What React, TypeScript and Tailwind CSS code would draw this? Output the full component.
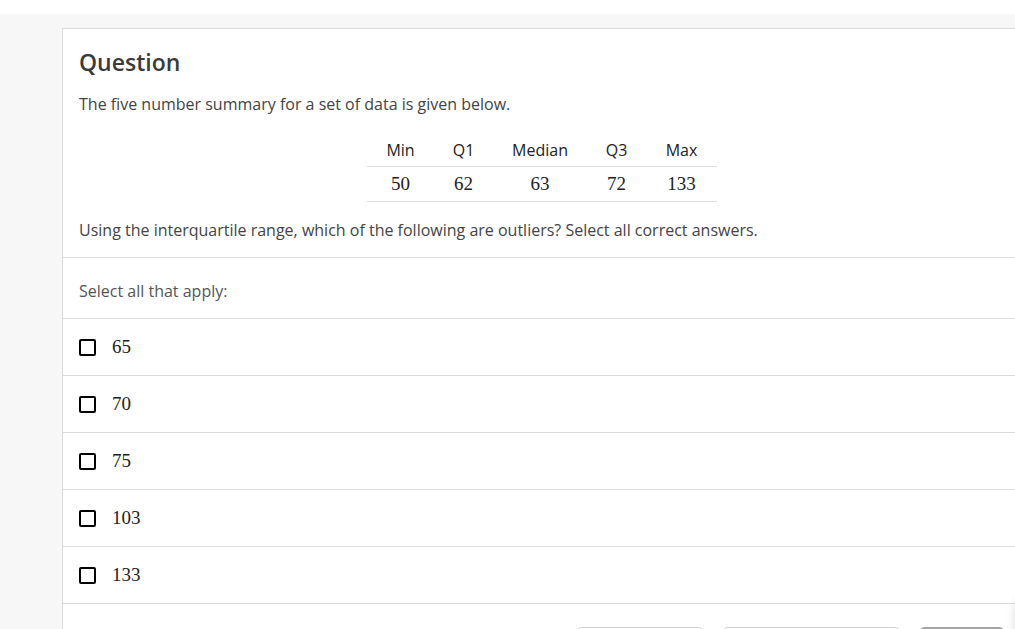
import React from "react";

const font = { fontFamily: '"Open Sans", "Noto Sans", sans-serif' };

const headers = [
  { label: "Min", w: "w-[67px]" },
  { label: "Q1", w: "w-[59px]" },
  { label: "Median", w: "w-[94px]" },
  { label: "Q3", w: "w-[59px]" },
  { label: "Max", w: "w-[71px]" },
];
const values = ["50", "62", "63", "72", "133"];
const options = ["65", "70", "75", "103", "133"];

export default function App() {
  return (
    <div
      className="relative w-[1015px] h-[629px] overflow-hidden bg-white"
      style={font}
    >
      <div className="mt-[14px] h-[615px] bg-[#f7f7f7] pt-[14px] pl-[62px]">
        <div className="w-[960px] border border-[#dcdcdc] bg-white">
          {/* Question section */}
          <div className="px-4 pt-[17px] pb-[15px] border-b border-[#dcdcdc]">
            <h1 className="text-[23px] leading-[32px] font-semibold text-[#3a3a3a]">
              Question
            </h1>
            <p className="mt-[14px] text-[16px] leading-[24px] text-[#444]">
              The five number summary for a set of data is given below.
            </p>
            <div className="mt-[18px] flex justify-center">
              <div className="flex flex-col">
                <div className="flex h-[33px] border-b border-[#dcdcdc]">
                  {headers.map((h) => (
                    <div
                      key={h.label}
                      className={`${h.w} flex items-center justify-center text-[16px] text-[#222]`}
                    >
                      {h.label}
                    </div>
                  ))}
                </div>
                <div className="flex h-[35px] border-b border-[#dcdcdc]">
                  {values.map((v, i) => (
                    <div
                      key={i}
                      className={`${headers[i].w} flex items-center justify-center text-[19px] text-[#222]`}
                      style={{ fontFamily: '"Liberation Serif", "DejaVu Serif", serif' }}
                    >
                      {v}
                    </div>
                  ))}
                </div>
              </div>
            </div>
            <p className="mt-[16px] text-[16px] leading-[24px] text-[#444]">
              Using the interquartile range, which of the following are outliers? Select all correct answers.
            </p>
          </div>
          {/* Select all */}
          <div className="px-4 pt-[21px] pb-[15px] border-b border-[#dcdcdc]">
            <p className="text-[16px] leading-[24px] text-[#555]">Select all that apply:</p>
          </div>
          {options.map((o) => (
            <div
              key={o}
              className="h-[57px] px-4 flex items-center border-b border-[#dcdcdc]"
            >
              <span className="w-[17px] h-[17px] border-2 border-black rounded-[2px] shrink-0" />
              <span
                className="ml-4 text-[19px] text-[#222]"
                style={{ fontFamily: '"Liberation Serif", "DejaVu Serif", serif' }}
              >
                {o}
              </span>
            </div>
          ))}
          {/* Footer buttons */}
          <div className="px-4 pt-[23px] pb-4 flex justify-end gap-[18px]">
            <div className="w-[128px] h-[38px] rounded-md border border-[#cfcfcf] bg-white" />
            <div className="w-[179px] h-[38px] rounded-md border border-[#cfcfcf] bg-white" />
            <div className="w-[86px] h-[38px] rounded-md bg-[#a3a3a3]" />
          </div>
        </div>
      </div>
      <div className="absolute left-[1015px] top-[600px] w-[60px] h-[60px] rounded-lg bg-white shadow-[0_0_10px_rgba(0,0,0,0.15)]" />
    </div>
  );
}
